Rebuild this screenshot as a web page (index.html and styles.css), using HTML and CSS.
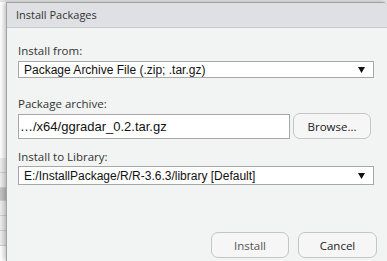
FILE: index.html
```html
<!DOCTYPE html>
<html lang="en">

<head>
    <meta charset="UTF-8">
    <meta name="viewport" content="width=device-width, initial-scale=1.0">
    <title>Install Packages</title>
    <link rel="stylesheet" href="styles.css">
</head>

<body>
    <div class="desk">
        <div class="side">
            <div class="siderow"></div>
            <div class="siderow"></div>
            <div class="siderow dark"></div>
            <div class="siderow"></div>
            <div class="siderow"></div>
            <div class="siderow"></div>
        </div>

        <div class="dialog">
            <div class="titlebar">Install Packages</div>

            <div class="form">
                <label class="lbl">Install from:</label>
                <div class="select sel1">
                    <span>Package Archive File (.zip; .tar.gz)</span>
                    <svg class="arrow" width="7" height="6" viewBox="0 0 7 6"><path d="M0 0H7L3.5 6Z" fill="#111"/></svg>
                </div>

                <label class="lbl lbl2">Package archive:</label>
                <div class="row">
                    <div class="textbox">…/x64/ggradar_0.2.tar.gz</div>
                    <button class="btn browse">Browse...</button>
                </div>

                <label class="lbl lbl3">Install to Library:</label>
                <div class="select sel2">
                    <span>E:/InstallPackage/R/R-3.6.3/library [Default]</span>
                    <svg class="arrow" width="7" height="6" viewBox="0 0 7 6"><path d="M0 0H7L3.5 6Z" fill="#111"/></svg>
                </div>
            </div>

            <div class="footer">
                <button class="btn install">Install</button>
                <button class="btn cancel">Cancel</button>
            </div>
        </div>
    </div>
</body>

</html>
```

FILE: styles.css
```css
body {
    margin: 0;
    background-color: #ffffff;
    overflow: hidden;
}

.desk {
    display: flex;
    height: 261px;
    background: linear-gradient(#e4e4e4 0, #e4e4e4 2px, #ffffff 2px);
}

.side {
    width: 6px;
    padding-top: 158px;
    display: flex;
    flex-direction: column;
}

.siderow {
    height: 14px;
    border-bottom: 1px solid #d2d2d2;
    background-color: #eeeeee;
}

.siderow.dark {
    height: 12px;
    background-color: #c4c4c4;
}

.dialog {
    flex: 1;
    margin-top: 2px;
    background-color: #f2f3f3;
    border-top: 1px solid #a2a2a2;
    border-left: 1px solid #a2a2a2;
    border-top-right-radius: 4px;
    box-shadow: -2px 0 5px rgba(0, 0, 0, 0.25);
}

.titlebar {
    height: 24px;
    line-height: 24px;
    padding-left: 9px;
    background-color: #dfe0e4;
    border-bottom: 1px solid #c9cbcd;
    border-top-right-radius: 4px;
    color: #333333;
    font-family: 'Open Sans', sans-serif;
    font-size: 11px;
}

.form {
    display: flex;
    flex-direction: column;
    padding: 14px 13px 0 11px;
}

.lbl {
    height: 18px;
    line-height: 18px;
    color: #333333;
    font-family: 'Open Sans', sans-serif;
    font-size: 11.5px;
}

.lbl2 {
    margin-top: 17px;
}

.lbl3 {
    margin-top: 9px;
}

.select {
    display: flex;
    align-items: center;
    justify-content: space-between;
    box-sizing: border-box;
    padding: 0 8px 0 5px;
    background-color: #ffffff;
    border: 1px solid #a8a8a8;
    color: #111111;
    font-family: 'Liberation Sans', Arial, sans-serif;
    font-size: 12px;
}

.sel1 {
    height: 17px;
    margin-top: 1px;
}

.sel2 {
    height: 19px;
}

.row {
    display: flex;
    align-items: center;
    gap: 3px;
}

.textbox {
    box-sizing: border-box;
    width: 272px;
    height: 25px;
    line-height: 23px;
    padding-left: 1px;
    background-color: #ffffff;
    border: 1px solid #a8a8a8;
    color: #111111;
    font-family: 'Liberation Sans', Arial, sans-serif;
    font-size: 13px;
}

.btn {
    box-sizing: border-box;
    height: 26px;
    padding: 0;
    background-color: #f6f6f6;
    border: 1px solid #c5c5c5;
    border-radius: 7px;
    color: #222222;
    font-family: 'Open Sans', sans-serif;
    font-size: 11.5px;
}

.browse {
    width: 78px;
}

.footer {
    display: flex;
    justify-content: flex-end;
    gap: 9px;
    margin-top: 47px;
    padding-right: 10px;
}

.install {
    width: 78px;
    color: #555555;
}

.cancel {
    width: 79px;
}
```
